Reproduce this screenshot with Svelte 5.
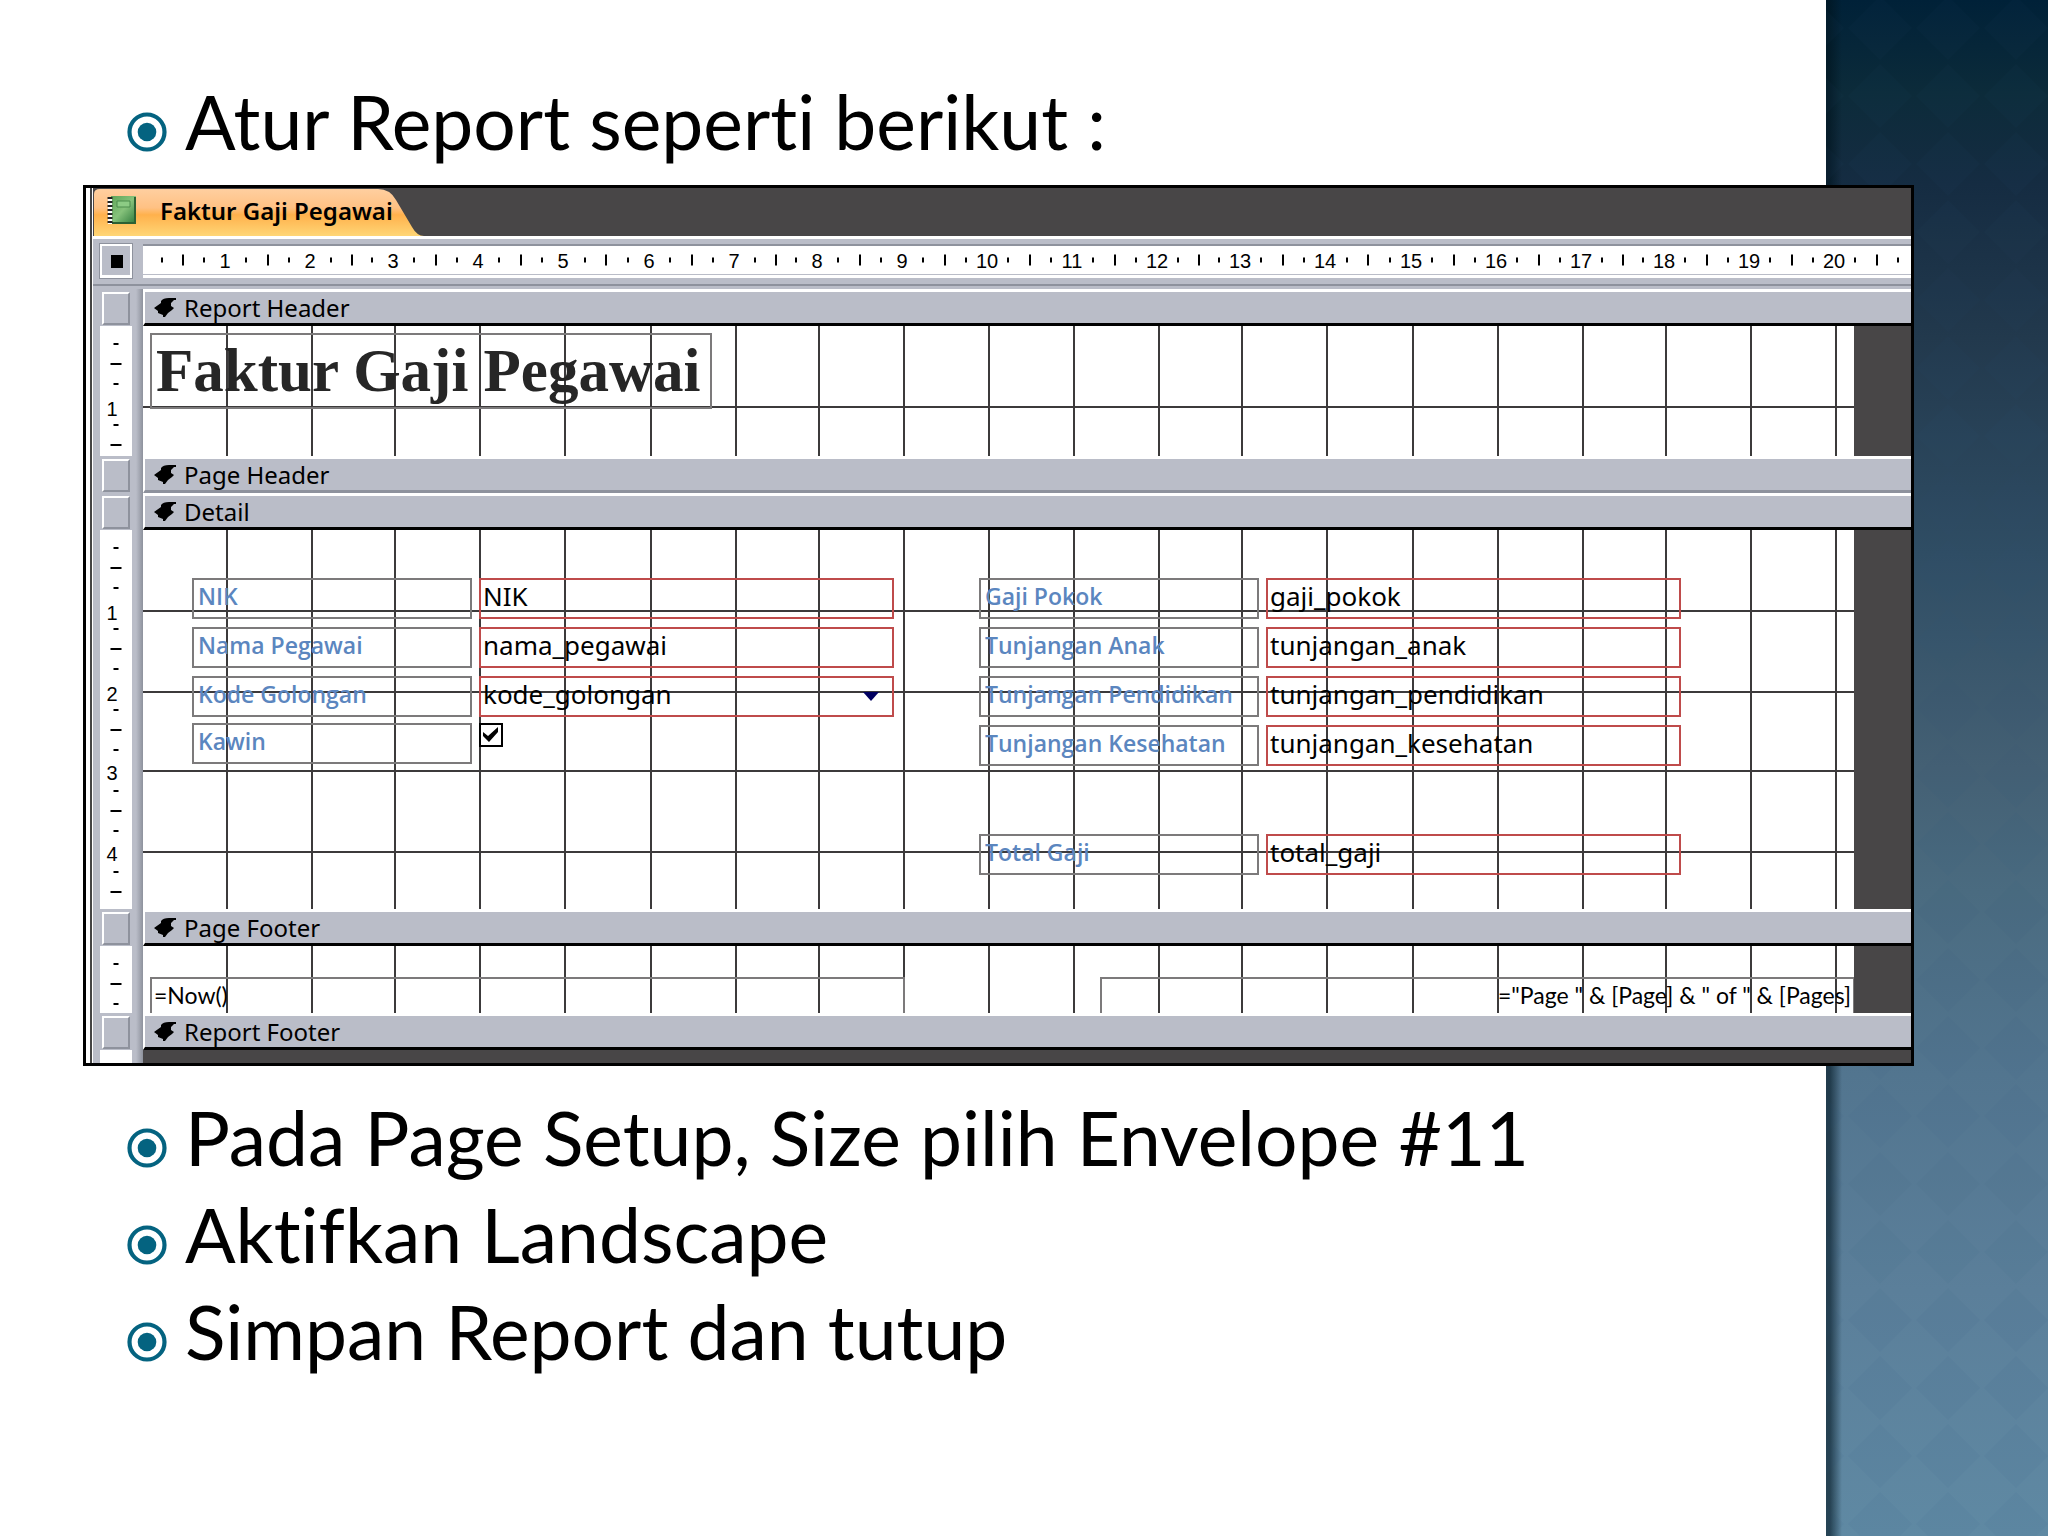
<script lang="ts">
  interface Field {
    kind: 'label' | 'text' | 'combo' | 'check' | 'title' | 'footer';
    text: string;
    x: number;
    y: number;
    w: number;
    h: number;
    align?: 'right';
  }

  interface Section {
    name: string;
    height: number;
    fields: Field[];
  }

  // centimetre marks, measured from the page's left and top edges
  const columns = [84, 169, 252, 337, 422, 508, 593, 676, 761, 846, 931, 1016, 1099, 1184, 1270, 1355, 1440, 1523, 1608, 1693];
  const rows = [81, 162, 241, 322];

  const topTicks = columns.concat(1778).flatMap((end, i) => {
    const start = i === 0 ? 0 : columns[i - 1];
    const step = (end - start) / 4;
    return [1, 2, 3].map((n) => ({ at: Math.round(start + step * n) - 2, long: n === 2 }));
  });

  function sideTicks(height: number) {
    const ticks: { at: number; long: boolean }[] = [];
    for (let i = 0; i < 5; i++) {
      for (const n of [1, 2, 3]) {
        const at = i * 81 + n * 20 - 2;
        if (at < height - 4) ticks.push({ at, long: n === 2 });
      }
    }
    return ticks;
  }

  function pair(label: string, name: string, x: number, y: number, kind: Field['kind'] = 'text'): Field[] {
    return [
      { kind: 'label', text: label, x, y, w: 280, h: 41 },
      { kind, text: name, x: x + 287, y, w: 415, h: 41 },
    ];
  }

  const sections: Section[] = [
    {
      name: 'Report Header',
      height: 130,
      fields: [{ kind: 'title', text: 'Faktur Gaji Pegawai', x: 7, y: 7, w: 562, h: 76 }],
    },
    { name: 'Page Header', height: 0, fields: [] },
    {
      name: 'Detail',
      height: 379,
      fields: [
        ...pair('NIK', 'NIK', 49, 48),
        ...pair('Nama Pegawai', 'nama_pegawai', 49, 97),
        ...pair('Kode Golongan', 'kode_golongan', 49, 146, 'combo'),
        ...pair('Kawin', 'kawin', 49, 193, 'check'),
        ...pair('Gaji Pokok', 'gaji_pokok', 836, 48),
        ...pair('Tunjangan Anak', 'tunjangan_anak', 836, 97),
        ...pair('Tunjangan Pendidikan', 'tunjangan_pendidikan', 836, 146),
        ...pair('Tunjangan Kesehatan', 'tunjangan_kesehatan', 836, 195),
        ...pair('Total Gaji', 'total_gaji', 836, 304),
      ],
    },
    {
      name: 'Page Footer',
      height: 67,
      fields: [
        { kind: 'footer', text: '=Now()', x: 7, y: 31, w: 755, h: 40 },
        { kind: 'footer', text: '="Page " & [Page] & " of " & [Pages]', x: 957, y: 31, w: 755, h: 40, align: 'right' },
      ],
    },
    { name: 'Report Footer', height: 0, fields: [] },
  ];

  const steps = ['Pada Page Setup, Size pilih Envelope #11', 'Aktifkan Landscape', 'Simpan Report dan tutup'];
</script>

{#snippet bullet()}
  <svg class="bullet" viewBox="0 0 40 40" aria-hidden="true">
    <circle cx="20" cy="20" r="17.5" fill="none" stroke="#046380" stroke-width="4.2" />
    <circle cx="20" cy="20" r="9.3" fill="#046380" />
  </svg>
{/snippet}

<div class="slide">
  <div class="panel">
    <svg class="pattern" aria-hidden="true">
      <defs>
        <pattern id="diamonds" x="20" y="-6" width="68" height="68" patternUnits="userSpaceOnUse">
          <g fill="#1d3f66" opacity="0.05">
            <path d="M34 2 66 34 34 66 2 34Z" />
            <path d="M34 8Q38 8 46 16L52 22Q60 30 60 34T52 46L46 52Q38 60 34 60T22 52L16 46Q8 38 8 34T16 22L22 16Q30 8 34 8Z" />
          </g>
        </pattern>
      </defs>
      <rect width="100%" height="100%" fill="url(#diamonds)" />
    </svg>
  </div>

  <main>
    <ul class="points">
      <li>{@render bullet()}<span>Atur Report seperti berikut :</span></li>
    </ul>

    <section class="window">
      <header class="tabs">
        <svg class="tab-shape" viewBox="0 0 330 48" aria-hidden="true">
          <defs>
            <linearGradient id="tab" x1="0" y1="0" x2="0" y2="1">
              <stop offset="0" stop-color="#ffcfa0" />
              <stop offset="0.4" stop-color="#ffc183" />
              <stop offset="0.55" stop-color="#ffb14c" />
              <stop offset="1" stop-color="#ffd676" />
            </linearGradient>
          </defs>
          <path d="M0 48V6Q0 1 6 1H284Q296 1 302 12L318 39Q323 48 330 48Z" fill="url(#tab)" />
        </svg>
        <button class="tab">
          <svg class="book" viewBox="0 0 30 28" aria-hidden="true">
            <defs>
              <linearGradient id="cover" x1="0" y1="0" x2="1" y2="1">
                <stop offset="0" stop-color="#5fa458" />
                <stop offset="0.5" stop-color="#86c27b" />
                <stop offset="1" stop-color="#2e7a3c" />
              </linearGradient>
            </defs>
            <path d="M4 0H29V27H4Z" fill="url(#cover)" />
            <path d="M28 1V27H5" fill="none" stroke="#2c6134" stroke-width="2" />
            <path d="M10 5H23V11H10Z" fill="#8ccb84" stroke="#4c8d4c" />
            <path d="M3 1V28" stroke="#222" stroke-width="5" stroke-dasharray="2 2" />
            <path d="M3 3V28" stroke="#fff" stroke-width="4" stroke-dasharray="2 2" />
          </svg>
          Faktur Gaji Pegawai
        </button>
      </header>

      <div class="ruler-row">
        <div class="corner"><button aria-label="Select report"></button></div>
        <div class="ruler">
          {#each topTicks as tick}
            <i class:long={tick.long} style:left="{tick.at}px"></i>
          {/each}
          {#each columns as x, i}
            <b style:left="{x - 2}px">{i + 1}</b>
          {/each}
        </div>
      </div>

      <div class="design">
        {#each sections as section}
          <div class="selector"><button aria-label="Select {section.name}"></button></div>
          <h2 class:flat={section.name === 'Page Header'}>
            <svg viewBox="0 0 22 20" aria-hidden="true">
              <path d="M0 10 7 5V3Q9 0 15 0H22V2H20L17 5V8L20 10 18 12 14 15 11 19 9 19V17L4 15V13Z" />
            </svg>
            {section.name}
          </h2>
          {#if section.height}
            <div class="side">
              {#each sideTicks(section.height) as tick}
                <i class:long={tick.long} style:top="{tick.at}px"></i>
              {/each}
              {#each rows.filter((y) => y < section.height) as y, i}
                <b style:top="{y + 2}px">{i + 1}</b>
              {/each}
            </div>
            <div class="band">
              <div class="page" style:height="{section.height}px">
                <svg class="grid" aria-hidden="true">
                  {#each columns as x}
                    <rect x={x - 1} y="0" width="2" height="100%" />
                  {/each}
                  {#each rows as y}
                    <rect x="0" y={y - 1} width="100%" height="2" />
                  {/each}
                </svg>
                {#each section.fields as field}
                  <div
                    class="field {field.kind}"
                    class:right={field.align === 'right'}
                    style:left="{field.x}px"
                    style:top="{field.y}px"
                    style:width="{field.w}px"
                    style:height="{field.h}px"
                  >
                    {#if field.kind === 'check'}
                      <input type="checkbox" checked aria-label="Kawin" />
                      <svg class="tick" viewBox="0 0 16 16" aria-hidden="true"><path d="M0 5 5 9 15 0V5L6 15 0 9Z" /></svg>
                    {:else}
                      <span>{field.text}</span>
                      {#if field.kind === 'combo'}
                        <svg class="arrow" viewBox="0 0 16 9" aria-hidden="true"><path d="M0 0H16L8 9Z" /></svg>
                      {/if}
                    {/if}
                  </div>
                {/each}
              </div>
            </div>
          {/if}
        {/each}
        <div class="side"></div>
        <div class="band end"></div>
      </div>
    </section>

    <ul class="points">
      {#each steps as step}
        <li>{@render bullet()}<span>{step}</span></li>
      {/each}
    </ul>
  </main>
</div>

<style>
  :global(body) {
    margin: 0;
    background: #fff;
  }

  .slide {
    position: relative;
    min-height: 100vh;
    color: #000;
    font-family: Lato, 'Trebuchet MS', sans-serif;
  }

  .panel {
    position: absolute;
    inset: 0 0 0 auto;
    width: 222px;
    background:
      linear-gradient(90deg, rgba(0, 20, 30, 0.6) 4px, transparent 16px),
      linear-gradient(#002138, #0c2b3a 6%, #152c42 12%, #22394d 22%, #2f4d64 36%, #446074 50%, #4a6b80 58%, #52758f 70%, #5b7f9a 84%, #5f89a3);
  }

  .pattern {
    width: 100%;
    height: 100%;
  }

  main {
    position: relative;
    display: flex;
    flex-direction: column;
    padding: 73px 134px 0 83px;
  }

  .points {
    margin: 0;
    padding: 0 0 0 44px;
    list-style: none;
  }

  .points li {
    display: flex;
    align-items: center;
    gap: 18px;
    height: 97px;
    font-size: 75px;
    font-variant-ligatures: none;
    line-height: 97px;
    white-space: nowrap;
  }

  .bullet {
    flex: none;
    width: 40px;
    height: 40px;
    margin-top: 20px;
  }

  .window {
    margin: 15px 0 23px;
    padding-left: 7px;
    border: 3px solid #000;
    background: linear-gradient(90deg, #fff 4px, #444 4px 6px, #fff 6px);
    font-family: 'Noto Sans', sans-serif;
  }

  button {
    padding: 0;
    border: 0;
    background: none;
    font: inherit;
    color: inherit;
  }

  .tabs {
    position: relative;
    height: 48px;
    background: #484647;
  }

  .tab-shape {
    position: absolute;
    left: 1px;
    top: 0;
    width: 330px;
    height: 48px;
  }

  .tab {
    position: relative;
    display: flex;
    align-items: center;
    gap: 23px;
    height: 44px;
    padding-left: 14px;
    font-size: 24px;
    font-weight: 600;
  }

  .book {
    width: 30px;
    height: 28px;
  }

  .ruler-row {
    display: grid;
    grid-template-columns: 32px 1fr;
    gap: 11px;
    padding: 5px 0 0 7px;
    border-top: 3px solid #fff;
    background: #babdc8;
  }

  .corner {
    display: flex;
    padding: 2px 0 0 2px;
    border: solid #fff;
    border-width: 2px 2px 3px;
    outline: 1px solid #8e929d;
  }

  .corner button {
    flex: 1;
    border: 7px solid #babdc8;
    background: #000;
  }

  .ruler {
    position: relative;
    height: 29px;
    overflow: hidden;
    border-top: 2px solid #8e929d;
    border-bottom: 3px solid #fff;
    background: #fff;
    box-shadow: inset 0 -1px #babdc8;
  }

  .ruler i,
  .ruler b,
  .side i,
  .side b {
    position: absolute;
    font: 20px/20px 'Liberation Sans', sans-serif;
    transform: translate(-50%, -50%);
  }

  .ruler i {
    top: 14px;
    width: 2px;
    height: 5px;
    background: #000;
  }

  .ruler .long {
    height: 11px;
  }

  .ruler b {
    top: 15px;
  }

  .design {
    display: grid;
    grid-template-columns: 32px 1fr;
    column-gap: 11px;
    padding: 5px 0 0 7px;
    border-top: 6px solid #babdc8;
    background:
      linear-gradient(#8e929d 2px, #babdc8 2px 5px, transparent 5px),
      linear-gradient(90deg, #babdc8 43px, #8e929d 50px);
  }

  .selector {
    display: flex;
    padding: 3px 2px 1px;
    background: #babdc8;
  }

  .selector button {
    flex: 1;
    border: 2px solid #fff;
    border-color: #fff #8e929d #8e929d #fff;
    background: #babdc8;
  }

  h2 {
    display: flex;
    align-items: center;
    gap: 8px;
    height: 31px;
    margin: 0;
    padding-left: 9px;
    border: solid;
    border-color: #fff #babdc8 #000 #fff;
    border-width: 3px 0 3px 2px;
    background: #babdc8;
    font-size: 24px;
    font-weight: 400;
    line-height: 31px;
  }

  h2 svg {
    width: 22px;
    height: 20px;
  }

  h2.flat {
    border-bottom-color: #8e929d;
  }

  .side {
    position: relative;
    background: #fff;
  }

  .side i {
    left: 16px;
    width: 5px;
    height: 2px;
    background: #000;
  }

  .side .long {
    width: 11px;
  }

  .side b {
    left: 12px;
  }

  .band {
    background: #484647;
  }

  .band.end {
    height: 13px;
  }

  .page {
    position: relative;
    width: 1711px;
    max-width: 100%;
    overflow: hidden;
    background: #fff;
  }

  .grid {
    display: block;
    width: 100%;
    height: 100%;
    fill: #3c3a3b;
  }

  .field {
    position: absolute;
    display: flex;
    box-sizing: border-box;
    padding: 0 4px;
    border: 2px solid #7c7a7b;
    font-size: 23px;
    line-height: 32px;
    white-space: pre;
  }

  .title {
    align-items: center;
    color: #262626;
    font: bold 61px/64px 'Liberation Serif', serif;
  }

  .label {
    color: #5b86bf;
    font-family: 'Open Sans', sans-serif;
    font-weight: 600;
  }

  .text,
  .combo {
    padding-left: 2px;
    border-color: #bf4b4b;
    font-size: 26px;
  }

  .combo {
    justify-content: space-between;
  }

  .arrow {
    width: 16px;
    height: 9px;
    margin: 14px 9px 0 0;
    fill: #000060;
  }

  .check {
    padding: 0;
    border: 0;
  }

  .check input {
    appearance: none;
    width: 24px;
    height: 24px;
    margin: 0;
    border: 2px solid #000;
    background: #fff;
  }

  .tick {
    position: absolute;
    left: 4px;
    top: 4px;
    width: 16px;
    height: 16px;
  }

  .footer {
    padding-left: 2px;
    font-family: Lato, sans-serif;
    font-size: 23px;
  }

  .right {
    justify-content: flex-end;
    padding-right: 2px;
  }
</style>
